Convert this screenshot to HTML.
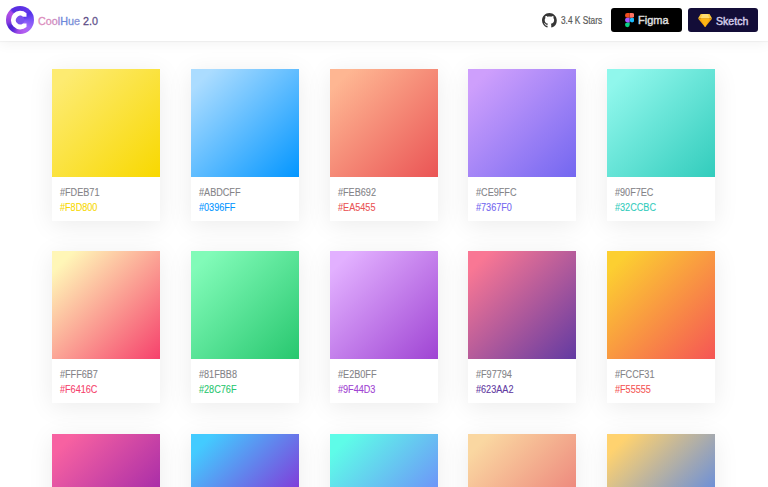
<!DOCTYPE html>
<html><head><meta charset="utf-8">
<style>
*{margin:0;padding:0;box-sizing:border-box}
html,body{width:768px;height:487px;overflow:hidden;background:#fff;font-family:"Liberation Sans",sans-serif}
.hdr{position:absolute;left:0;top:0;width:768px;height:41px;background:#fff;box-shadow:0 1px 1px rgba(0,0,0,.035),0 3px 12px rgba(0,0,0,.05);z-index:2}
.logo{position:absolute;left:5.9px;top:6.1px;width:28.4px;height:28.4px}
.brand{position:absolute;left:38px;top:13.9px;font-size:11.6px;line-height:14px;transform:scaleX(.93);transform-origin:0 0;white-space:nowrap;-webkit-text-stroke:.3px currentColor}
.gh{position:absolute;left:542px;top:12.8px;width:14.8px;height:14.8px}
.stars{position:absolute;left:561px;top:15.1px;font-size:10px;transform:scaleX(.83);transform-origin:0 0;line-height:11px;color:#5a5a5a;white-space:nowrap;-webkit-text-stroke:.2px currentColor}
.btn{position:absolute;top:8.3px;height:24px;border-radius:3px;color:#dcdcdc;font-size:11px;line-height:24px;white-space:nowrap;-webkit-text-stroke:.45px currentColor}
.figma{left:611px;width:71px;background:#000}
.sketch{left:688px;width:70px;background:#130d38;color:#d2cbe8}
.card{position:absolute;width:108.1px;height:152px;background:#fff;box-shadow:0 4px 24px rgba(0,0,0,.08)}
.sw{position:absolute;left:0;top:0;width:100%;height:107.8px}
.t1,.t2{position:absolute;left:8px;font-size:10px;line-height:12px;white-space:nowrap;transform:scaleX(.91);transform-origin:0 0}
.t1{top:118.1px;color:#848488;-webkit-text-stroke:.1px #848488}
.t2{top:133.1px;-webkit-text-stroke:.1px currentColor}
</style></head><body>
<div class="hdr">
 <div class="logo"><div style="position:absolute;inset:0;border-radius:50%;background:conic-gradient(from 0deg at 50% 50%,#5a2fe2 0deg,#6338ea 40deg,#5232ea 55deg,#7a52f6 90deg,#a068fa 130deg,#b45ef0 160deg,#a04ce6 190deg,#5a2ad8 215deg,#4a22d4 235deg,#8a3ee0 260deg,#b04ee6 300deg,#a84ae8 312deg,#5a2fe2 322deg)"></div>
  <svg style="position:absolute;left:0;top:0" width="28" height="28" viewBox="0 0 28 28"><circle cx="14.2" cy="14.1" r="4.4" fill="#7a52ee"/><path fill="#fff" d="M20.50 7.26 A9.3 9.3 0 1 0 20.50 20.94 L20.50 17.40 L16.96 17.40 A4.3 4.3 0 1 1 16.96 10.80 L20.50 10.80 Z"/></svg></div>
 <div class="brand"><span style="color:#dc8cbc">C</span><span style="color:#d98dbd">o</span><span style="color:#cf8bc0">o</span><span style="color:#a886cc">l</span><span style="color:#6c88da">H</span><span style="color:#7590da">u</span><span style="color:#8a94d6">e</span> <span style="color:#5c4c86">2</span><span style="color:#5c4c86">.</span><span style="color:#66568e">0</span></div>
 <svg class="gh" viewBox="0 0 16 16"><path fill="#363636" d="M8 0C3.58 0 0 3.58 0 8c0 3.54 2.29 6.53 5.47 7.59.4.07.55-.17.55-.38 0-.19-.01-.82-.01-1.49-2.01.37-2.53-.49-2.69-.94-.09-.23-.48-.94-.82-1.13-.28-.15-.68-.52-.01-.53.63-.01 1.08.58 1.23.82.72 1.21 1.87.87 2.33.66.07-.52.28-.87.51-1.07-1.78-.2-3.64-.89-3.64-3.95 0-.87.31-1.59.82-2.15-.08-.2-.36-1.02.08-2.12 0 0 .67-.21 2.2.82.64-.18 1.32-.27 2-.27.68 0 1.36.09 2 .27 1.53-1.04 2.2-.82 2.2-.82.44 1.1.16 1.92.08 2.12.51.56.82 1.27.82 2.15 0 3.07-1.87 3.75-3.65 3.95.29.25.54.73.54 1.48 0 1.07-.01 1.93-.01 2.2 0 .21.15.46.55.38A8.013 8.013 0 0016 8c0-4.42-3.58-8-8-8z"/></svg>
 <div class="stars">3.4 K Stars</div>
 <div class="btn figma">
  <svg style="position:absolute;left:13.5px;top:5.2px" width="9.4" height="14.2" viewBox="0 0 38 57">
   <path fill="#1abcfe" d="M19 28.5a9.5 9.5 0 1 1 19 0 9.5 9.5 0 0 1-19 0z"/>
   <path fill="#0acf83" d="M0 47.5A9.5 9.5 0 0 1 9.5 38H19v9.5a9.5 9.5 0 1 1-19 0z"/>
   <path fill="#ff7262" d="M19 0v19h9.5a9.5 9.5 0 1 0 0-19H19z"/>
   <path fill="#f24e1e" d="M0 9.5A9.5 9.5 0 0 0 9.5 19H19V0H9.5A9.5 9.5 0 0 0 0 9.5z"/>
   <path fill="#a259ff" d="M0 28.5A9.5 9.5 0 0 0 9.5 38H19V19H9.5A9.5 9.5 0 0 0 0 28.5z"/>
  </svg>
  <span style="position:absolute;left:27px;top:0">Figma</span>
 </div>
 <div class="btn sketch">
  <svg style="position:absolute;left:9.5px;top:5.8px" width="14.2" height="13.2" viewBox="0 0 14.2 13.2">
   <polygon points="2.7,0 11.5,0 14.2,4.5 0,4.5" fill="#fdcb3c"/>
   <polygon points="4.6,0 9.6,0 11.5,4.5 2.7,4.5" fill="#fedd72"/>
   <polygon points="0,4.5 14.2,4.5 7.1,13.2" fill="#f7a50a"/>
   <polygon points="2.7,4.5 11.5,4.5 7.1,13.2" fill="#fdb515"/>
  </svg>
  <span style="position:absolute;left:27.7px;top:0.8px;transform:scaleX(.96);transform-origin:0 0">Sketch</span>
 </div>
</div>

<div class="card" style="left:52.4px;top:68.8px"><div class="sw" style="background:linear-gradient(135deg,#FDEB71 10%,#F8D800 100%)"></div><div class="t1">#FDEB71</div><div class="t2" style="color:#F8D800">#F8D800</div></div>
<div class="card" style="left:191px;top:68.8px"><div class="sw" style="background:linear-gradient(135deg,#ABDCFF 10%,#0396FF 100%)"></div><div class="t1">#ABDCFF</div><div class="t2" style="color:#0396FF">#0396FF</div></div>
<div class="card" style="left:329.6px;top:68.8px"><div class="sw" style="background:linear-gradient(135deg,#FEB692 10%,#EA5455 100%)"></div><div class="t1">#FEB692</div><div class="t2" style="color:#EA5455">#EA5455</div></div>
<div class="card" style="left:468.2px;top:68.8px"><div class="sw" style="background:linear-gradient(135deg,#CE9FFC 10%,#7367F0 100%)"></div><div class="t1">#CE9FFC</div><div class="t2" style="color:#7367F0">#7367F0</div></div>
<div class="card" style="left:606.8px;top:68.8px"><div class="sw" style="background:linear-gradient(135deg,#90F7EC 10%,#32CCBC 100%)"></div><div class="t1">#90F7EC</div><div class="t2" style="color:#32CCBC">#32CCBC</div></div>

<div class="card" style="left:52.4px;top:251.1px"><div class="sw" style="background:linear-gradient(135deg,#FFF6B7 10%,#F6416C 100%)"></div><div class="t1">#FFF6B7</div><div class="t2" style="color:#F6416C">#F6416C</div></div>
<div class="card" style="left:191px;top:251.1px"><div class="sw" style="background:linear-gradient(135deg,#81FBB8 10%,#28C76F 100%)"></div><div class="t1">#81FBB8</div><div class="t2" style="color:#28C76F">#28C76F</div></div>
<div class="card" style="left:329.6px;top:251.1px"><div class="sw" style="background:linear-gradient(135deg,#E2B0FF 10%,#9F44D3 100%)"></div><div class="t1">#E2B0FF</div><div class="t2" style="color:#9F44D3">#9F44D3</div></div>
<div class="card" style="left:468.2px;top:251.1px"><div class="sw" style="background:linear-gradient(135deg,#F97794 10%,#623AA2 100%)"></div><div class="t1">#F97794</div><div class="t2" style="color:#623AA2">#623AA2</div></div>
<div class="card" style="left:606.8px;top:251.1px"><div class="sw" style="background:linear-gradient(135deg,#FCCF31 10%,#F55555 100%)"></div><div class="t1">#FCCF31</div><div class="t2" style="color:#F55555">#F55555</div></div>

<div class="card" style="left:52.4px;top:433.5px"><div class="sw" style="background:linear-gradient(135deg,#F761A1 10%,#8C1BAB 100%)"></div></div>
<div class="card" style="left:191px;top:433.5px"><div class="sw" style="background:linear-gradient(135deg,#43CBFF 10%,#9708CC 100%)"></div></div>
<div class="card" style="left:329.6px;top:433.5px"><div class="sw" style="background:linear-gradient(135deg,#5EFCE8 10%,#736EFE 100%)"></div></div>
<div class="card" style="left:468.2px;top:433.5px"><div class="sw" style="background:linear-gradient(135deg,#FAD7A1 10%,#E96D71 100%)"></div></div>
<div class="card" style="left:606.8px;top:433.5px"><div class="sw" style="background:linear-gradient(135deg,#FFD26F 10%,#3677FF 100%)"></div></div>
</body></html>
